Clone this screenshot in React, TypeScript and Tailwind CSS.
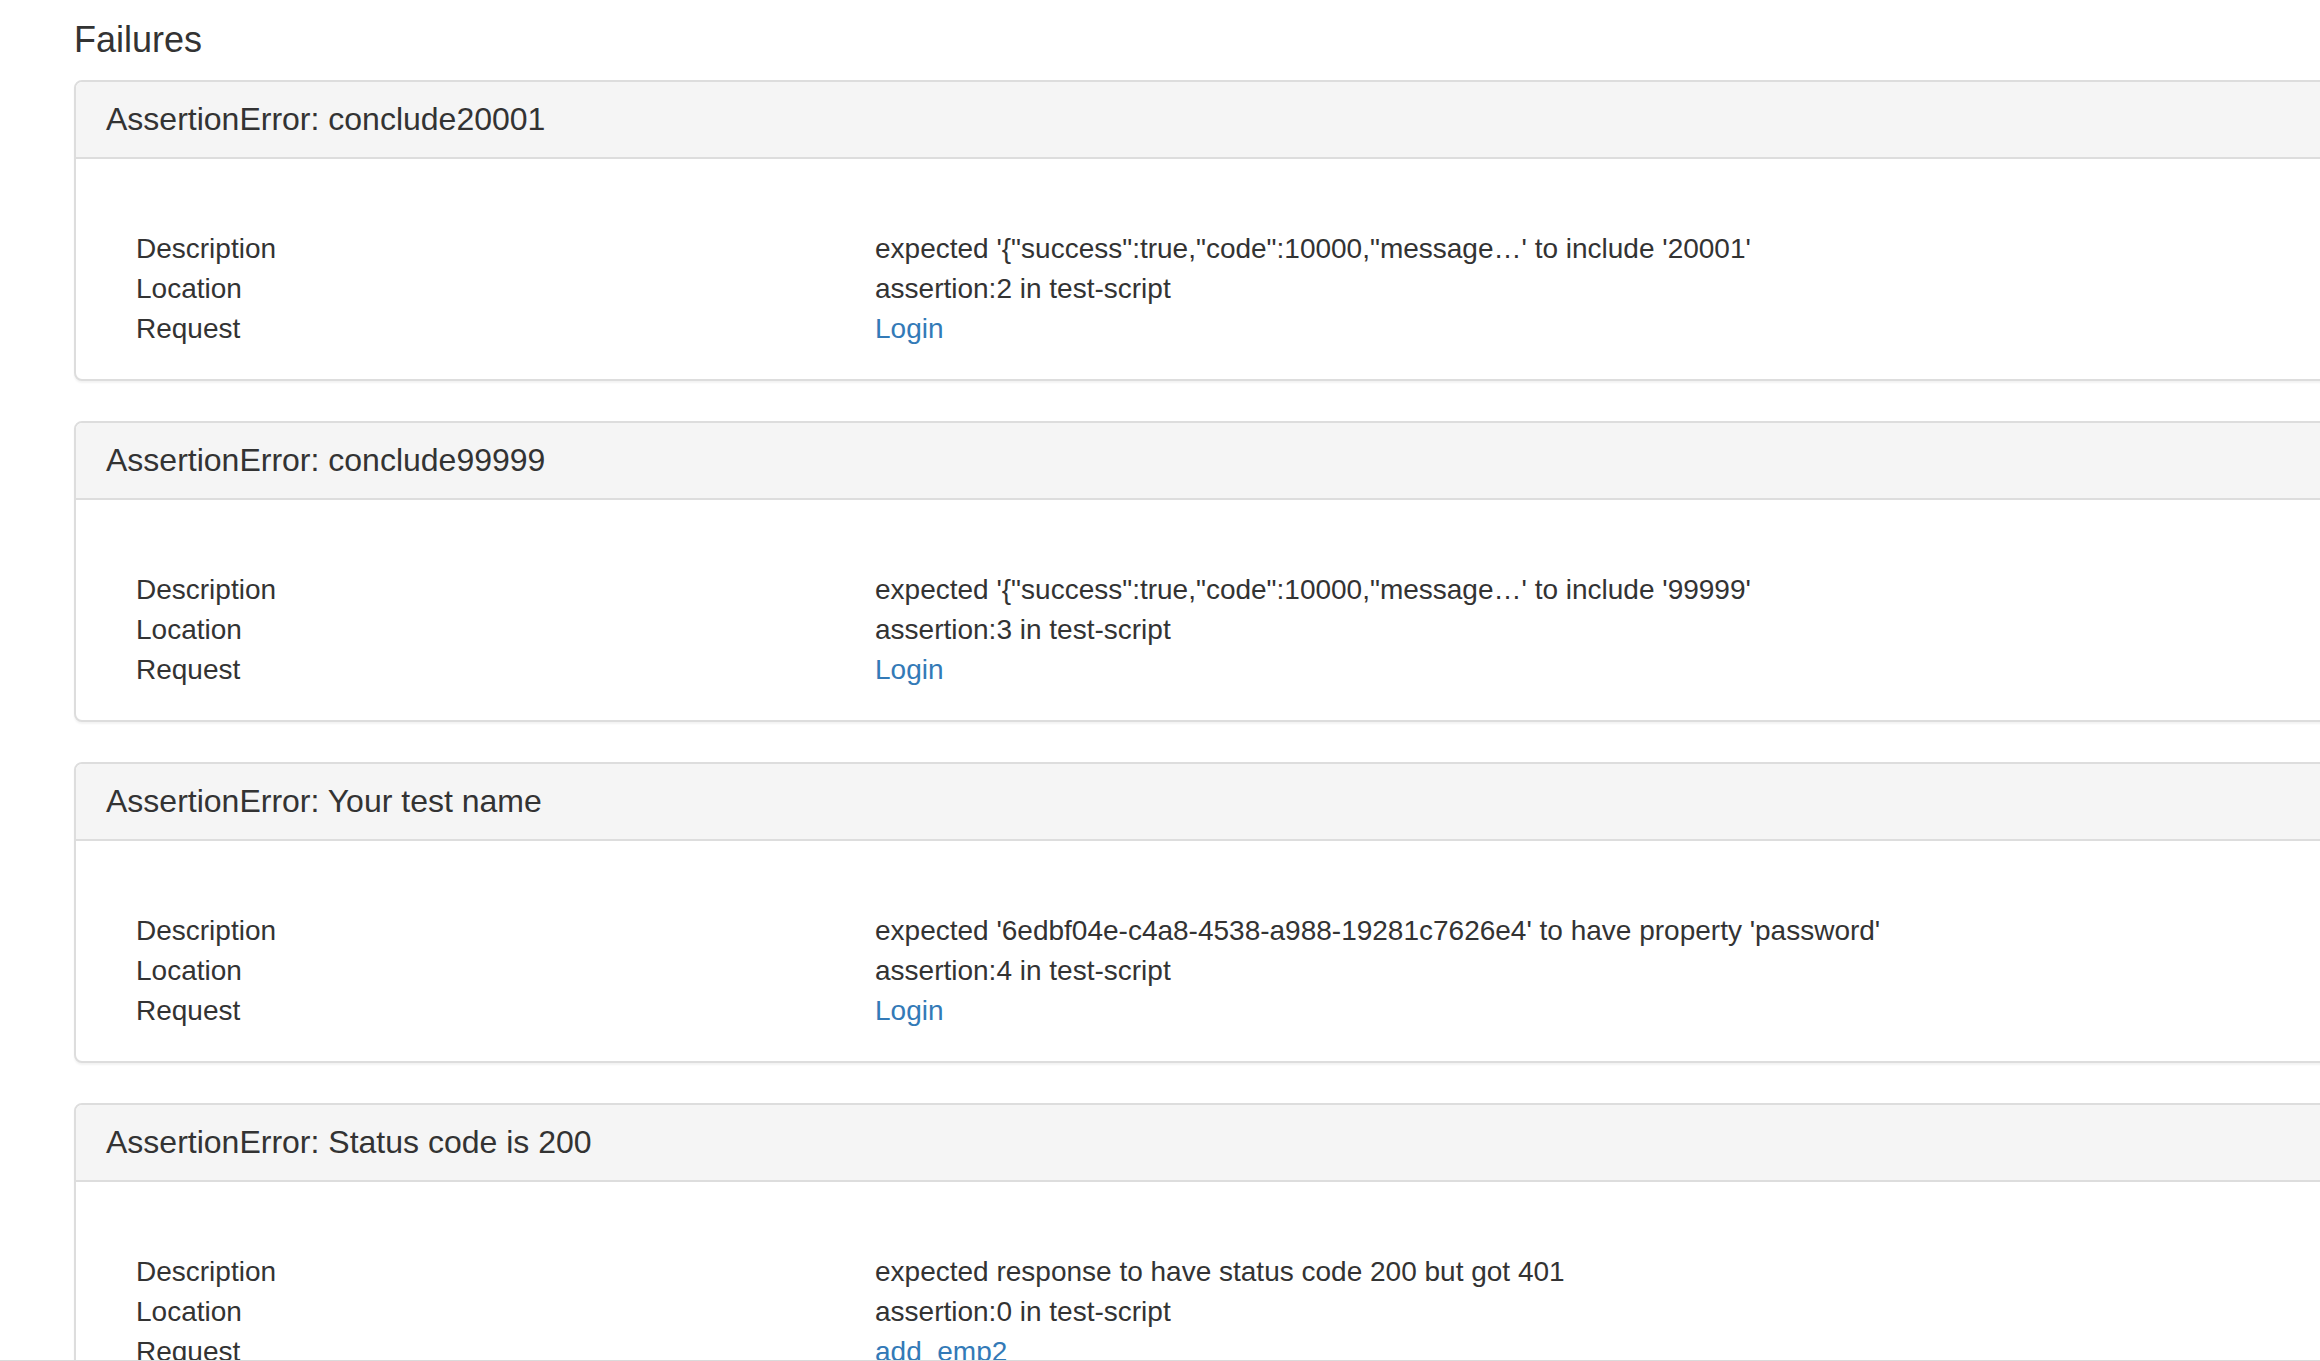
const failures = [
  {
    title: 'AssertionError: conclude20001',
    description: `expected '{"success":true,"code":10000,"message…' to include '20001'`,
    location: 'assertion:2 in test-script',
    request: 'Login',
  },
  {
    title: 'AssertionError: conclude99999',
    description: `expected '{"success":true,"code":10000,"message…' to include '99999'`,
    location: 'assertion:3 in test-script',
    request: 'Login',
  },
  {
    title: 'AssertionError: Your test name',
    description: "expected '6edbf04e-c4a8-4538-a988-19281c7626e4' to have property 'password'",
    location: 'assertion:4 in test-script',
    request: 'Login',
  },
  {
    title: 'AssertionError: Status code is 200',
    description: 'expected response to have status code 200 but got 401',
    location: 'assertion:0 in test-script',
    request: 'add_emp2',
  },
]

type Failure = (typeof failures)[number]

function Row({ label, children }: { label: string; children: React.ReactNode }) {
  return (
    <div className="flex h-[40px] items-center">
      <span className="w-[739px] shrink-0">{label}</span>
      <span className="whitespace-nowrap">{children}</span>
    </div>
  )
}

function FailureCard({ failure }: { failure: Failure }) {
  return (
    <div className="mb-[40px] w-[2300px] rounded-[8px] border-2 border-[#ddd] bg-white shadow-[0_2px_2px_rgba(0,0,0,0.05)]">
      {/* Heading */}
      <div className="rounded-t-[6px] border-b-2 border-[#ddd] bg-[#f5f5f5] px-[30px] py-[20px]">
        <h3 className="text-[32px] leading-[35px] text-[#333]">{failure.title}</h3>
      </div>
      {/* Body */}
      <div className="pl-[60px] pr-[30px] pt-[70px] pb-[30px] text-[28px] text-[#333]">
        <Row label="Description">{failure.description}</Row>
        <Row label="Location">{failure.location}</Row>
        <Row label="Request">
          <a className="text-[#337ab7]" href="#">
            {failure.request}
          </a>
        </Row>
      </div>
    </div>
  )
}

export default function App() {
  return (
    <div
      className="h-[1361px] w-full overflow-hidden border-b border-[#dadada] bg-white"
      style={{ fontFamily: '"Liberation Sans", Arial, Helvetica, sans-serif' }}
    >
      <div className="pl-[74px]">
        <h4 className="pt-[20px] pb-[20px] text-[36px] leading-[40px] text-[#333]">Failures</h4>
        {failures.map((f, i) => (
          <FailureCard key={i} failure={f} />
        ))}
      </div>
    </div>
  )
}
